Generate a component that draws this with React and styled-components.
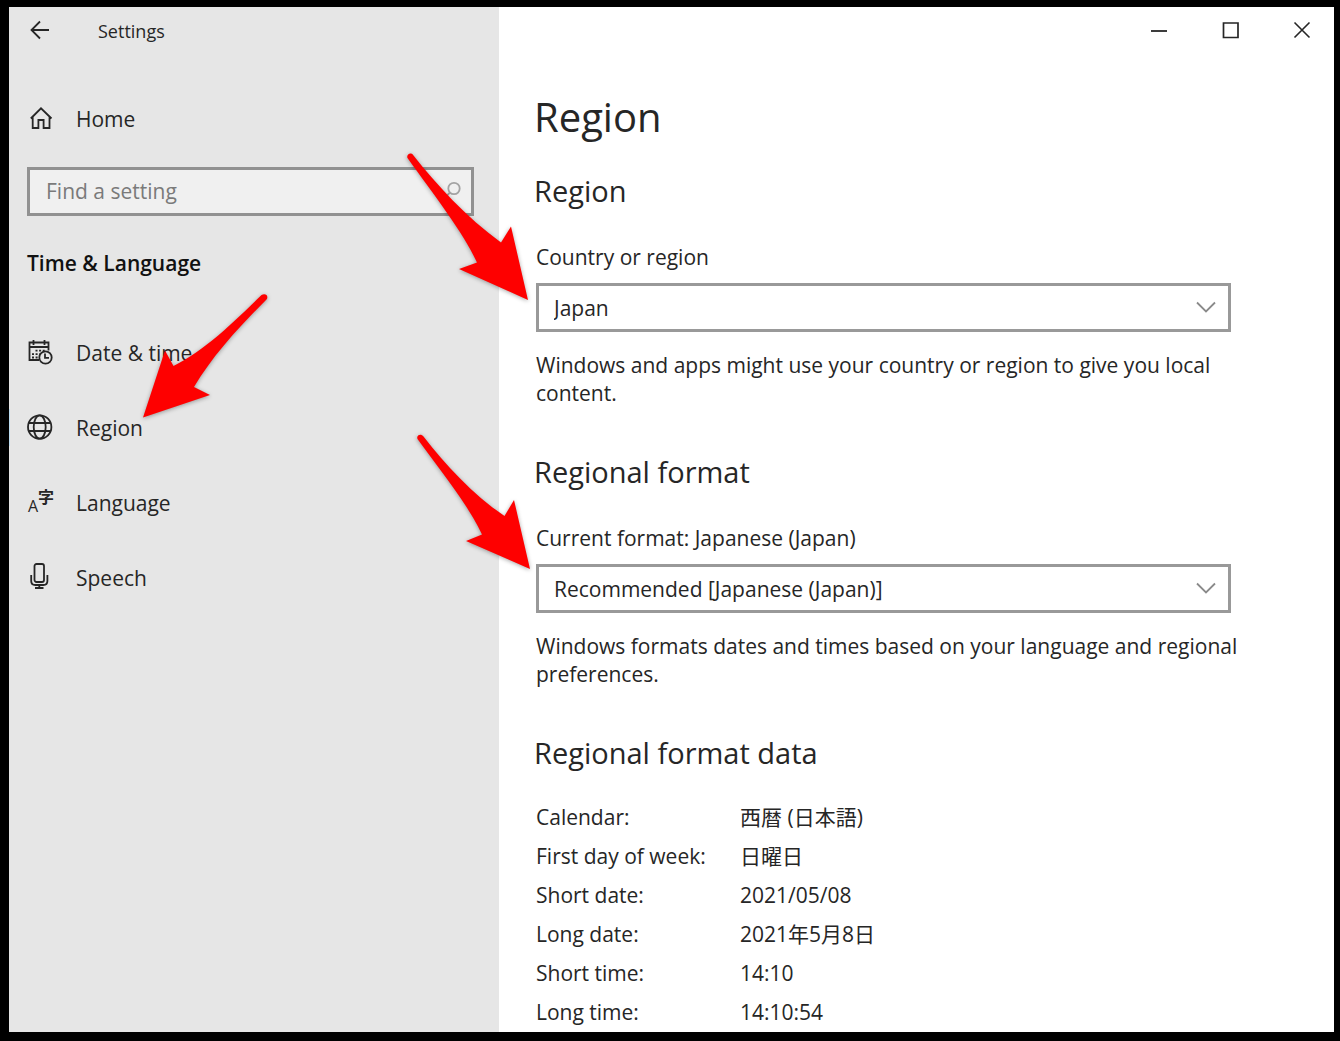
import React from "react";
import styled, { createGlobalStyle } from "styled-components";

const GlobalStyle = createGlobalStyle`
  *, *::before, *::after { box-sizing: border-box; }
  body {
    margin: 0;
    background: #000;
    color: #262626;
    font-family: "Open Sans", "Noto Sans CJK JP", sans-serif;
    font-size: 21px;
    line-height: 28px;
  }
`;

const Desktop = styled.div`
  position: relative;
  display: flex;
  min-height: 100vh;
  padding: 7px 6px 9px 9px;
  background: #000;
`;

const Window = styled.div`
  flex: 1;
  display: grid;
  grid-template-columns: 490px minmax(0, 1fr);
  background: #fff;
`;

const Sidebar = styled.aside`
  background: #e6e6e6;
`;

const TitleBar = styled.header`
  display: flex;
  align-items: center;
  height: 48px;
  padding-left: 17px;
  gap: 44px;
  font-size: 18px;
`;

const IconButton = styled.button`
  display: grid;
  place-items: center;
  width: ${(p) => p.$width};
  height: 46px;
  padding: 0;
  border: 0;
  background: transparent;
  color: #262626;
`;

const Glyph = styled.svg`
  display: block;
  flex: none;
  overflow: visible;
  fill: none;
  stroke: currentColor;
  stroke-width: ${(p) => p.$weight || 1.8};
`;

const SideLink = styled.a`
  display: flex;
  align-items: center;
  height: 37px;
  padding-left: 18px;
  gap: 24px;
  border-left: 1px solid ${(p) => (p.$active ? "#bcdcf0" : "transparent")};
  color: #262626;
  text-decoration: none;
`;

const HomeRow = styled.div`
  margin-top: 45px;
`;

const SearchBox = styled.label`
  display: flex;
  align-items: center;
  height: 49px;
  margin: 30px 25px 0 18px;
  padding: 0 10px 2px 16px;
  border: 3px solid #919191;
  background: #f0f0f0;
  color: #a3a3a3;
`;

const SearchInput = styled.input`
  flex: 1;
  min-width: 0;
  padding: 0;
  border: 0;
  outline: 0;
  background: transparent;
  color: #262626;
  font: inherit;
  &::placeholder {
    color: #7a7a7a;
    opacity: 1;
  }
`;

const GroupTitle = styled.h2`
  margin: 33px 0 0 18px;
  font-size: 21px;
  line-height: 28px;
  font-weight: 600;
  color: #111;
`;

const NavList = styled.ul`
  display: grid;
  gap: 38px;
  margin: 57px 0 0;
  padding: 0;
  list-style: none;
`;

const Main = styled.main`
  display: flex;
  flex-direction: column;
`;

const WindowControls = styled.div`
  display: flex;
  justify-content: flex-end;
  gap: 8px;
  height: 48px;
`;

const Content = styled.div`
  padding: 34px 94px 0 35px;
`;

const PageTitle = styled.h1`
  margin: 0 0 26px;
  font-size: 40px;
  line-height: 56px;
  font-weight: 400;
`;

const Section = styled.section`
  margin-bottom: ${(p) => (p.$last ? "0" : "45px")};
`;

const SectionTitle = styled.h2`
  margin: 0;
  font-size: 29px;
  line-height: 40px;
  font-weight: 400;
`;

const Field = styled.div`
  display: grid;
  gap: 12px;
  padding: 32px 9px 19px 2px;
`;

const SelectFrame = styled.div`
  position: relative;
`;

const Select = styled.select`
  display: block;
  appearance: none;
  width: 100%;
  height: 49px;
  padding: 0 48px 0 15px;
  border: 3px solid #999;
  border-radius: 0;
  background: #fff;
  color: #262626;
  font: inherit;
`;

const Chevron = styled(Glyph)`
  position: absolute;
  top: 18px;
  right: 15px;
  color: #8a8a8a;
  pointer-events: none;
`;

const Note = styled.p`
  margin: 0;
  padding-left: 2px;
`;

const DataTable = styled.table`
  margin: 25px 0 0 2px;
  border-collapse: collapse;
  line-height: 39px;
`;

const DataLabel = styled.th`
  width: 204px;
  padding: 0;
  font-weight: 400;
  text-align: left;
`;

const DataValue = styled.td`
  height: 39px;
  padding: 0;
`;

const Arrow = styled.svg`
  position: absolute;
  left: ${(p) => p.$x}px;
  top: ${(p) => p.$y}px;
  overflow: visible;
  fill: #fe0000;
  pointer-events: none;
  filter: drop-shadow(0 1px 2px rgba(0, 0, 0, 0.35));
`;

const HomeIcon = () => (
  <Glyph width="24" height="24" viewBox="0 0 24 24" aria-hidden="true">
    <path d="M2.800 11.500 13 1.300 23.500 11.500M4.700 10V21h5.700v-8h5.200v8h5.900V10" />
  </Glyph>
);

const CalendarIcon = () => (
  <Glyph width="24" height="28" viewBox="0 0 24 28" aria-hidden="true" $weight={1.8}>
    <path d="M11 21H1.500V3.500h19v8M1.500 8h19M5.500 1v5M16.500 1v5" />
    <path d="M7.500 11.700h10M4 15.200h9M4 18.500h7" strokeDasharray="2 1.600" />
    <circle cx="17.500" cy="18.500" r="6.200" />
    <path d="M17 14.500v4.300h4" />
  </Glyph>
);

const GlobeIcon = () => (
  <Glyph width="24" height="28" viewBox="0 0 24 28" aria-hidden="true" $weight={1.8}>
    <circle cx="11.700" cy="13" r="11.700" />
    <ellipse cx="11.700" cy="13" rx="6" ry="11.700" />
    <path d="M1 9h21.500M1 17h21.500" />
  </Glyph>
);

const LanguageMark = styled.text`
  fill: #262626;
  stroke: none;
  font-size: 16px;
  font-weight: ${(p) => p.$bold};
`;

const LanguageIcon = () => (
  <Glyph width="24" height="28" viewBox="0 0 24 28" aria-hidden="true">
    <LanguageMark x="0" y="23" $bold={500}>A</LanguageMark>
    <LanguageMark x="10" y="14" $bold={600}>字</LanguageMark>
  </Glyph>
);

const MicIcon = () => (
  <Glyph width="24" height="30" viewBox="0 0 24 30" aria-hidden="true">
    <rect x="6.500" y="1" width="9.500" height="18" rx="2" />
    <path d="M3.200 12v6q0 4 4 4h8.200q4 0 4-4v-6M11.300 22v3M7 25h8.500" />
  </Glyph>
);

const navItems = [
  { label: "Date & time", Icon: CalendarIcon },
  { label: "Region", Icon: GlobeIcon, active: true },
  { label: "Language", Icon: LanguageIcon },
  { label: "Speech", Icon: MicIcon },
];

const formatData = [
  ["Calendar:", "西暦 (日本語)"],
  ["First day of week:", "日曜日"],
  ["Short date:", "2021/05/08"],
  ["Long date:", "2021年5月8日"],
  ["Short time:", "14:10"],
  ["Long time:", "14:10:54"],
];

const arrows = [
  { x: 400, y: 150, w: 130, h: 152, d: "M7.500 8C6 4.500 11 1.500 13.500 5.500C36 34 66 67 101 92.500L111 76.500L128 150L59 119L77 112.500C63 82 34 45 7.500 8Z" },
  { x: 410, y: 430, w: 122, h: 140, d: "M7.500 9C6 5 11 3 13.500 6.500C35 34 62 64 94.500 86L104 70L120 139L56 111L72 104.500C60 78 34 45 7.500 9Z" },
  { x: 140, y: 290, w: 130, h: 130, d: "M121.500 5C125.500 2.500 129 6 126.500 9.500C95 41 72 67 54 97L70 105L3 127.500L25 60.500L33.500 76C64 61 93 33 121.500 5Z" },
];

function SelectField({ id, label, value }) {
  return (
    <Field>
      <label htmlFor={id}>{label}</label>
      <SelectFrame>
        <Select id={id} defaultValue={value}>
          <option>{value}</option>
        </Select>
        <Chevron width="20" height="12" viewBox="0 0 20 12" aria-hidden="true">
          <path d="m1 1.500 9 9 9-9" />
        </Chevron>
      </SelectFrame>
    </Field>
  );
}

export default function App() {
  return (
    <>
      <GlobalStyle />
      <Desktop>
        <Window>
          <Sidebar>
            <TitleBar>
              <IconButton $width="28px" aria-label="Back">
                <Glyph width="20" height="20" viewBox="0 0 20 20" aria-hidden="true">
                  <path d="M19 9H2M10 0.500 1.500 9 10 17.500" />
                </Glyph>
              </IconButton>
              <span>Settings</span>
            </TitleBar>
            <HomeRow>
              <SideLink href="#home">
                <HomeIcon />
                Home
              </SideLink>
            </HomeRow>
            <SearchBox>
              <SearchInput type="text" placeholder="Find a setting" aria-label="Find a setting" />
              <Glyph width="20" height="20" viewBox="0 0 20 20" aria-hidden="true">
                <circle cx="13" cy="7.500" r="5.700" />
                <path d="m9 11.500-7 7" />
              </Glyph>
            </SearchBox>
            <GroupTitle>Time &amp; Language</GroupTitle>
            <nav>
              <NavList>
                {navItems.map(({ label, Icon, active }) => (
                  <li key={label}>
                    <SideLink href={"#" + label} $active={active} aria-current={active ? "page" : undefined}>
                      <Icon />
                      {label}
                    </SideLink>
                  </li>
                ))}
              </NavList>
            </nav>
          </Sidebar>
          <Main>
            <WindowControls>
              <IconButton $width="64px" aria-label="Minimize">
                <Glyph width="18" height="18" viewBox="0 0 18 18" aria-hidden="true">
                  <path d="M2 10h16" />
                </Glyph>
              </IconButton>
              <IconButton $width="64px" aria-label="Maximize">
                <Glyph width="18" height="18" viewBox="0 0 18 18" aria-hidden="true" $weight={1.7}>
                  <path d="M2.500 2h14.500v14.500h-14.500z" />
                </Glyph>
              </IconButton>
              <IconButton $width="64px" aria-label="Close">
                <Glyph width="18" height="18" viewBox="0 0 18 18" aria-hidden="true" $weight={1.6}>
                  <path d="m1.500 1.500 15 15m0-15-15 15" />
                </Glyph>
              </IconButton>
            </WindowControls>
            <Content>
              <PageTitle>Region</PageTitle>
              <Section>
                <SectionTitle>Region</SectionTitle>
                <SelectField id="country" label="Country or region" value="Japan" />
                <Note>Windows and apps might use your country or region to give you local content.</Note>
              </Section>
              <Section>
                <SectionTitle>Regional format</SectionTitle>
                <SelectField
                  id="format"
                  label="Current format: Japanese (Japan)"
                  value="Recommended [Japanese (Japan)]"
                />
                <Note>Windows formats dates and times based on your language and regional preferences.</Note>
              </Section>
              <Section $last>
                <SectionTitle>Regional format data</SectionTitle>
                <DataTable>
                  <tbody>
                    {formatData.map(([label, value]) => (
                      <tr key={label}>
                        <DataLabel scope="row">{label}</DataLabel>
                        <DataValue>{value}</DataValue>
                      </tr>
                    ))}
                  </tbody>
                </DataTable>
              </Section>
            </Content>
          </Main>
        </Window>
        {arrows.map((a) => (
          <Arrow key={a.d} $x={a.x} $y={a.y} width={a.w} height={a.h} viewBox={`0 0 ${a.w} ${a.h}`} aria-hidden="true">
            <path d={a.d} />
          </Arrow>
        ))}
      </Desktop>
    </>
  );
}
